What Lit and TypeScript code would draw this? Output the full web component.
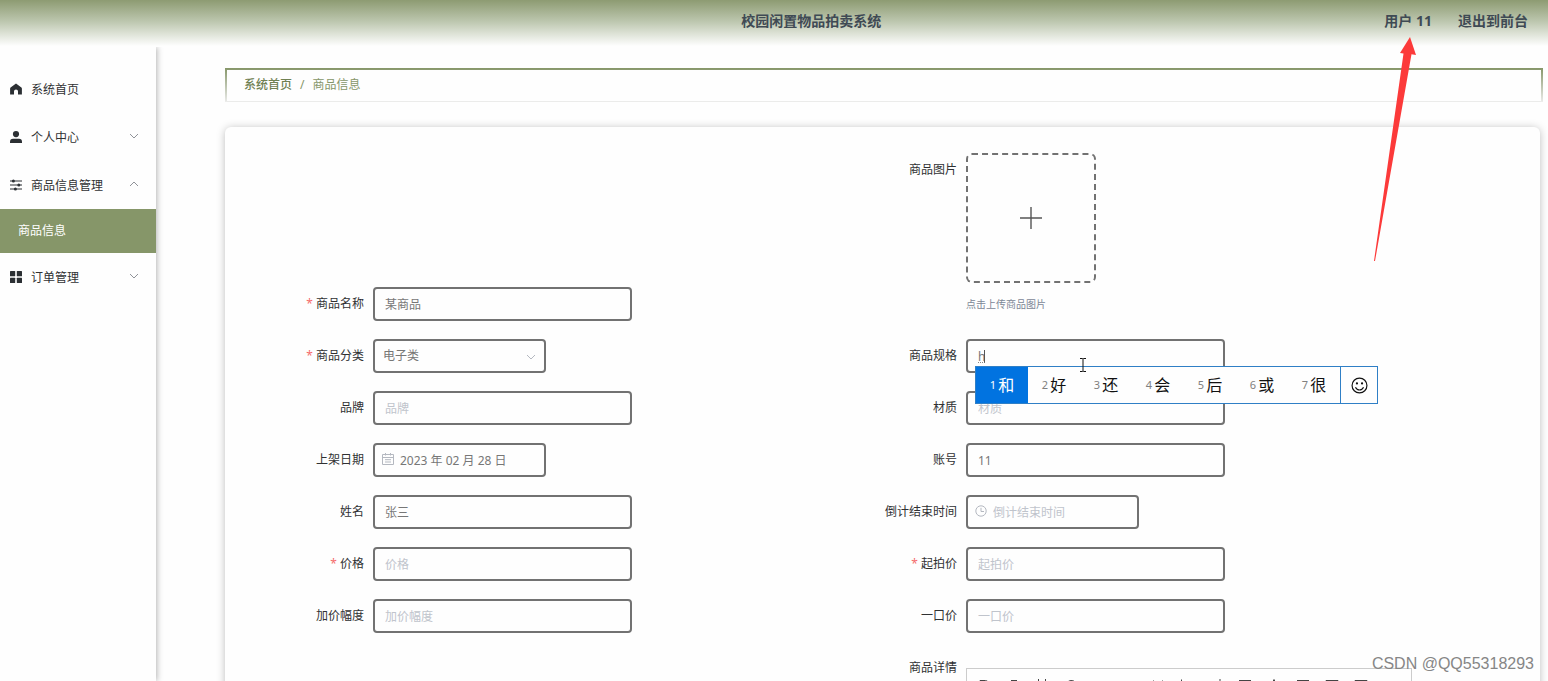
import { LitElement, html, css, svg, nothing } from "lit";
import type { TemplateResult } from "lit";
import { customElement, property, state } from "lit/decorators.js";
import { classMap } from "lit/directives/class-map.js";

const FONT = css`"Noto Sans", "Noto Sans CJK SC", sans-serif`;

const chevron = (up = false) => html`
  <svg class="chevron" viewBox="0 0 10 6" width="10" height="6" aria-hidden="true">
    <path d=${up ? "M1 5 5 1 9 5" : "M1 1 5 5 9 1"} fill="none" stroke="currentColor" stroke-width="1" />
  </svg>
`;

const icons: Record<string, TemplateResult> = {
  home: svg`<path d="M6 0.4 11.4 4.6Q11.9 5 11.9 5.7V11.6H8V8.2Q8 6.6 6 6.6T4 8.2V11.6H0.1V5.7Q0.1 5 0.6 4.6Z" />`,
  user: svg`<circle cx="6" cy="3.1" r="3.1" /><path d="M0 12V10.8Q0 7.8 3 7.8H9Q12 7.8 12 10.8V12Z" />`,
  sliders: svg`<path d="M0 1.5h12v1H0zM0 5.5h12v1H0zM0 9.5h12v1H0z" />
    <circle cx="3.4" cy="2" r="1.5" /><circle cx="8.8" cy="6" r="1.5" /><circle cx="5.4" cy="10" r="1.5" />`,
  grid: svg`<rect width="5.2" height="5.2" rx=".5" /><rect x="6.8" width="5.2" height="5.2" rx=".5" />
    <rect y="6.8" width="5.2" height="5.2" rx=".5" /><rect x="6.8" y="6.8" width="5.2" height="5.2" rx=".5" />`,
};

@customElement("side-menu")
class SideMenu extends LitElement {
  static styles = css`
    :host {
      display: block;
      padding-top: 18px;
      background: #fefefe;
      box-shadow: 1px 0 6px rgba(0, 0, 0, 0.3);
      font: 12px/20px ${FONT};
    }
    .item {
      display: flex;
      align-items: center;
      gap: 9px;
      height: 48px;
      padding: 0 17px 0 10px;
      color: #303133;
      text-decoration: none;
    }
    .icon {
      flex: none;
      fill: #2b2f33;
    }
    .text {
      flex: 1;
      padding-top: 2px;
    }
    .chevron {
      margin-bottom: 3px;
      color: #909399;
    }
    .sub {
      display: flex;
      align-items: center;
      height: 44px;
      padding-left: 18px;
      background: #869669;
      color: #fff;
      text-decoration: none;
    }
  `;

  private item(icon: string, text: string, arrow?: "up" | "down") {
    return html`
      <a class="item" href="#">
        <svg class="icon" viewBox="0 0 12 12" width="12" height="12" aria-hidden="true">${icons[icon]}</svg>
        <span class="text">${text}</span>
        ${arrow ? chevron(arrow === "up") : nothing}
      </a>
    `;
  }

  render() {
    return html`
      <nav>
        ${this.item("home", "系统首页")} ${this.item("user", "个人中心", "down")}
        ${this.item("sliders", "商品信息管理", "up")}
        <a class="sub" href="#">商品信息</a>
        ${this.item("grid", "订单管理", "down")}
      </nav>
    `;
  }
}

@customElement("ime-bar")
class ImeBar extends LitElement {
  @property({ type: Array }) words: string[] = [];
  @state() private selected = 0;

  static styles = css`
    :host {
      display: flex;
      height: 36px;
      border: 1px solid #2f7fc6;
      background: #fefefe;
      font: 16px/20px ${FONT};
    }
    button {
      display: flex;
      align-items: center;
      justify-content: center;
      width: 52px;
      padding: 0;
      border: 0;
      background: none;
      color: #111;
      font: inherit;
    }
    .num {
      padding-right: 2px;
      color: #808080;
      font-size: 11px;
    }
    .on,
    .on .num {
      background: #0173e0;
      color: #fff;
    }
    .emoji {
      width: 37px;
      border-left: 1px solid #2f7fc6;
    }
  `;

  render() {
    return html`
      ${this.words.map(
        (word, i) => html`
          <button class=${classMap({ on: i === this.selected })} @click=${() => (this.selected = i)}>
            <span class="num">${i + 1}</span>${word}
          </button>
        `,
      )}
      <button class="emoji" aria-label="表情">
        <svg viewBox="0 0 16 16" width="17" height="17" fill="none" stroke="#111" stroke-width="1.1">
          <circle cx="8" cy="8" r="7" />
          <path d="M4.2 9.6Q5.4 12.2 8 12.2T11.8 9.6" />
          <circle cx="5.6" cy="6" r=".5" fill="#111" />
          <circle cx="10.4" cy="6" r=".5" fill="#111" />
        </svg>
      </button>
    `;
  }
}

interface Field {
  id: string;
  label: string;
  value?: string;
  required?: boolean;
  kind?: "select" | "date" | "time" | "typing";
}

const rows: [Field, Field][] = [
  [
    { id: "category", label: "商品分类", value: "电子类", required: true, kind: "select" },
    { id: "spec", label: "商品规格", value: "h", kind: "typing" },
  ],
  [
    { id: "brand", label: "品牌" },
    { id: "material", label: "材质" },
  ],
  [
    { id: "listed", label: "上架日期", value: "2023 年 02 月 28 日", kind: "date" },
    { id: "account", label: "账号", value: "11" },
  ],
  [
    { id: "name", label: "姓名", value: "张三" },
    { id: "deadline", label: "倒计结束时间", kind: "time" },
  ],
  [
    { id: "price", label: "价格", required: true },
    { id: "start", label: "起拍价", required: true },
  ],
  [
    { id: "step", label: "加价幅度" },
    { id: "buyout", label: "一口价" },
  ],
];

const tools: [string, string][] = [
  ["粗体", "M4 2.5H9.5Q12 2.5 12 5T9.5 7.5H4ZM4 7.5H10Q13 7.5 13 10.5T10 13.5H4Z"],
  ["斜体", "M6 2.5H12M4 13.5H10M9 2.5 7 13.5"],
  ["下划线", "M4.5 1V7Q4.5 11 8 11T11.5 7V1M3 14.5H13"],
  ["删除线", "M12 4Q11 2.5 8 2.5T4.5 5 8 8 12 11 8 13.5 4 12M2 8H14"],
  ["引用", "M3 4.5H7V9H3ZM7 9Q7 12 4 12M9 4.5H13V9H9ZM13 9Q13 12 10 12"],
  ["代码", "M5 4 1.5 8 5 12M11 4 14.5 8 11 12"],
  ["标题", "M3.5 2.5V13.5M12.5 2.5V13.5M3.5 8H12.5"],
  ["有序列表", "M6 3.5H15M6 8H15M6 12.5H15M2.5 1.5V5M1.5 8H3.5M1.5 12.5H3.5"],
  ["上标", "M2 5 9 13M9 5 2 13M12 6V1"],
  ["缩进", "M2 2.5H14M7 6.5H14M7 10H14M2 13.5H14M2 6 4.5 8.2 2 10.5"],
  ["颜色", "M3.5 11 8 1.5 12.5 11M5 8H11M2 14.5H14"],
  ["对齐", "M2 2.5H14M2 6.5H10M2 10H14M2 13.5H10"],
  ["图片", "M2 2.5H14V13.5H2ZM2 12 6 8 9 11 11 9 14 12"],
  ["视频", "M2 2.5H14V13.5H2ZM5 2.5V13.5M11 2.5V13.5M5 8H11"],
];

@customElement("goods-form")
class GoodsForm extends LitElement {
  static styles = css`
    :host {
      display: block;
      padding: 26px 64px 26px 65px;
      font: 12px/20px ${FONT};
      color: #606266;
    }
    .grid {
      display: grid;
      grid-template-columns: 1fr 1fr;
      gap: 18px 0;
      align-items: end;
    }
    .row {
      display: grid;
      grid-template-columns: 74px 1fr;
      column-gap: 9px;
    }
    .right {
      grid-column: 2;
    }
    .label {
      line-height: 34px;
      text-align: right;
      white-space: nowrap;
      color: #303133;
    }
    .required::before {
      content: "* ";
      color: #f56c6c;
    }
    .control {
      position: relative;
      display: flex;
      width: 259px;
    }
    .short {
      width: 173px;
    }
    .input {
      box-sizing: border-box;
      width: 100%;
      height: 34px;
      padding: 0 10px;
      border: 2px solid #727272;
      border-radius: 4px;
      outline: 0;
      appearance: none;
      background: #fefefe;
      color: #777;
      font: inherit;
    }
    .select {
      padding: 0 8px;
    }
    .input::placeholder {
      color: #c0c4cc;
      opacity: 1;
    }
    .prefixed {
      padding-left: 25px;
    }
    .prefix {
      position: absolute;
      left: 9px;
      top: 10px;
      color: #b4b8c0;
    }
    .chevron {
      position: absolute;
      right: 10px;
      top: 15px;
      color: #b4b8c0;
    }
    .caret {
      position: absolute;
      left: 12px;
      top: 11px;
      width: 6px;
      height: 12px;
      border-right: 1px solid #555;
      border-bottom: 1px dotted #888;
    }
    .cursor {
      position: absolute;
      left: 113px;
      top: 19px;
      z-index: 3;
    }
    .ime {
      position: absolute;
      left: 9px;
      top: 27px;
      z-index: 2;
    }
    .upload {
      display: flex;
      align-items: center;
      justify-content: center;
      width: 130px;
      height: 130px;
      padding: 0;
      border: 2px dashed #727272;
      border-radius: 6px;
      background: none;
    }
    .hint {
      padding-top: 4px;
      font-size: 10px;
      line-height: 34px;
      color: #7c8796;
    }
    .editor {
      width: 444px;
      margin-top: 17px;
      border: 1px solid #ccc;
    }
    .toolbar {
      display: flex;
      gap: 13px;
      padding: 9px;
    }
    .tool {
      display: flex;
      padding: 0;
      border: 0;
      background: none;
    }
    .area {
      box-sizing: border-box;
      display: block;
      width: 100%;
      height: 200px;
      border: 0;
      border-top: 1px solid #ccc;
    }
  `;

  private label(f: Field) {
    return html`<label class=${classMap({ label: true, required: !!f.required })} for=${f.id}>${f.label}</label>`;
  }

  private input(f: Field, prefixed = false) {
    return html`<input
      class=${classMap({ input: true, prefixed })}
      id=${f.id}
      type="text"
      autocomplete="off"
      .value=${f.value ?? ""}
      placeholder=${f.label}
    />`;
  }

  private control(f: Field) {
    switch (f.kind) {
      case "select":
        return html`<div class="control short">
          <select class="input select" id=${f.id}>
            <option>${f.value}</option>
          </select>
          ${chevron()}
        </div>`;
      case "date":
        return html`<div class="control short">
          ${this.input(f, true)}
          <svg class="prefix" viewBox="0 0 12 12" width="12" height="12" fill="none" stroke="currentColor" aria-hidden="true">
            <path d="M.5 1.5h11v10H.5zM.5 4.5h11M3.5 0v2.5M8.5 0v2.5M3 6.7h6M3 9h6" />
          </svg>
        </div>`;
      case "time":
        return html`<div class="control short">
          ${this.input(f, true)}
          <svg class="prefix" viewBox="0 0 12 12" width="12" height="12" fill="none" stroke="currentColor" aria-hidden="true">
            <circle cx="6" cy="6" r="5.2" />
            <path d="M6 2.8V6.5H9" />
          </svg>
        </div>`;
      case "typing":
        return html`<div class="control">
          ${this.input(f)}
          <span class="caret"></span>
          <ime-bar class="ime" .words=${["和", "好", "还", "会", "后", "或", "很"]}></ime-bar>
          <svg class="cursor" viewBox="0 0 8 14" width="8" height="14" fill="none" stroke="#111" aria-hidden="true">
            <path d="M1 .5H3.5L4 1 4.5.5H7M4 1V13M1 13.5H3.5L4 13 4.5 13.5H7" />
          </svg>
        </div>`;
      default:
        return html`<div class="control">${this.input(f)}</div>`;
    }
  }

  private row(f: Field) {
    return html`<div class="row">${this.label(f)}${this.control(f)}</div>`;
  }

  render() {
    return html`
      <form class="grid">
        ${this.row({ id: "title", label: "商品名称", value: "某商品", required: true })}
        <div class="row">
          <label class="label" for="picture">商品图片</label>
          <div>
            <button class="upload" id="picture" type="button">
              <svg viewBox="0 0 22 22" width="22" height="22" stroke="#555" stroke-width="1.4" aria-hidden="true">
                <path d="M11 0V22M0 11H22" />
              </svg>
            </button>
            <div class="hint">点击上传商品图片</div>
          </div>
        </div>
        ${rows.map(([left, right]) => [this.row(left), this.row(right)])}
        <div class="row right">
          <label class="label" for="detail">商品详情</label>
          <div class="editor">
            <div class="toolbar">
              ${tools.map(
                ([name, path]) => html`
                  <button class="tool" type="button" aria-label=${name}>
                    <svg viewBox="0 0 16 16" width="16" height="16" fill="none" stroke="#444"><path d=${path} /></svg>
                  </button>
                `,
              )}
            </div>
            <textarea class="area" id="detail"></textarea>
          </div>
        </div>
      </form>
    `;
  }
}

@customElement("app-root")
class AppRoot extends LitElement {
  static styles = css`
    :host {
      position: relative;
      display: grid;
      grid-template: 47px 1fr / 156px 1fr;
      height: 100vh;
      overflow: hidden;
      background: #fefefe;
      font: 12px/20px ${FONT};
    }
    .header {
      grid-column: 1 / -1;
      z-index: 1;
      display: flex;
      align-items: center;
      gap: 26px;
      padding: 0 20px 6px 264px;
      background: linear-gradient(#8d9b72, #bcc6ae 45%, #fefefe 98%);
      color: #3f4a54;
      font-size: 14px;
      font-weight: 700;
    }
    .title {
      flex: 1;
      margin: 0;
      font: inherit;
      text-align: center;
    }
    .link {
      color: inherit;
      text-decoration: none;
    }
    .main {
      display: flex;
      flex-direction: column;
      gap: 25px;
      min-height: 0;
      padding: 21px 5px 0 69px;
    }
    .crumbs {
      display: flex;
      gap: 8px;
      padding: 5px 17px 6px;
      border: 2px solid;
      border-image: linear-gradient(#869669, #eee) 2;
      border-bottom-width: 1px;
      color: #869669;
    }
    .crumb {
      color: #6f8052;
      font-weight: 500;
      text-decoration: none;
    }
    .card {
      flex: none;
      margin-right: 3px;
      border-radius: 6px;
      background: #fefefe;
      box-shadow: 0 1px 8px rgba(0, 0, 0, 0.26);
    }
    .arrow {
      position: absolute;
      top: 37px;
      right: 132px;
      z-index: 4;
      pointer-events: none;
    }
    .mark {
      position: absolute;
      right: 14px;
      bottom: 7px;
      z-index: 4;
      color: #868686;
      font: 16px/20px "Liberation Sans", sans-serif;
    }
  `;

  render() {
    return html`
      <header class="header">
        <h1 class="title">校园闲置物品拍卖系统</h1>
        <span>用户 11</span>
        <a class="link" href="#">退出到前台</a>
      </header>
      <side-menu></side-menu>
      <main class="main">
        <nav class="crumbs">
          <a class="crumb" href="#">系统首页</a><span>/</span><span>商品信息</span>
        </nav>
        <goods-form class="card"></goods-form>
      </main>
      <svg class="arrow" viewBox="0 0 42 224" width="42" height="224" aria-hidden="true">
        <path d="M36 0 42 18 37.5 17.3 1 224H0L29.5 16.5 26 16Z" fill="#fc3a3a" />
      </svg>
      <div class="mark">CSDN @QQ55318293</div>
    `;
  }
}
